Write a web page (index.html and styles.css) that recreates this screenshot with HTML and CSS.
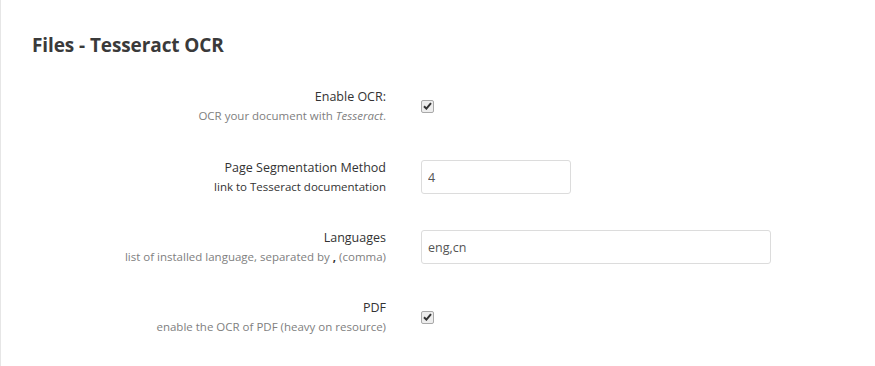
FILE: index.html
```html
<!DOCTYPE html>
<html lang="en">
<head>
    <meta charset="UTF-8">
    <meta name="viewport" content="width=device-width, initial-scale=1.0">
    <title>Files - Tesseract OCR</title>
    <link rel="stylesheet" href="styles.css">
</head>
<body>
    <div class="page">
        <h2 class="title">Files - Tesseract OCR</h2>

        <div class="form">
            <div class="row">
                <div class="label">
                    <div class="name">Enable OCR:</div>
                    <div class="help">OCR your document with <em>Tesseract</em>.</div>
                </div>
                <div class="control">
                    <span class="check">
                        <svg width="9" height="8" viewBox="0 0 9 8"><path d="M1 4.2 L3.4 6.6 L8 1.2" fill="none" stroke="#333" stroke-width="2"/></svg>
                    </span>
                </div>
            </div>

            <div class="row">
                <div class="label">
                    <div class="name">Page Segmentation Method</div>
                    <div class="help dark">link to Tesseract documentation</div>
                </div>
                <div class="control">
                    <input class="field small" type="text" value="4">
                </div>
            </div>

            <div class="row">
                <div class="label">
                    <div class="name">Languages</div>
                    <div class="help">list of installed language, separated by <b>,</b> (comma)</div>
                </div>
                <div class="control">
                    <input class="field wide" type="text" value="eng,cn">
                </div>
            </div>

            <div class="row">
                <div class="label">
                    <div class="name">PDF</div>
                    <div class="help">enable the OCR of PDF (heavy on resource)</div>
                </div>
                <div class="control">
                    <span class="check">
                        <svg width="9" height="8" viewBox="0 0 9 8"><path d="M1 4.2 L3.4 6.6 L8 1.2" fill="none" stroke="#333" stroke-width="2"/></svg>
                    </span>
                </div>
            </div>
        </div>
    </div>
</body>
</html>
```

FILE: styles.css
```css
html, body {
    margin: 0;
    height: 100%;
    background: #fff;
}
body {
    font-family: "Open Sans", "Noto Sans", sans-serif;
    color: #333;
}
.page {
    min-height: 100%;
    box-sizing: border-box;
    border-left: 1px solid #e6e6e6;
    padding: 32px 0 0 31px;
}
.title {
    margin: 0 0 29px 0;
    font-size: 19px;
    line-height: 26px;
    font-weight: 700;
    color: #3a3a3a;
    letter-spacing: -0.1px;
}
.form {
    display: flex;
    flex-direction: column;
    gap: 32px;
}
.row {
    display: grid;
    grid-template-columns: 354px 1fr;
    column-gap: 35px;
    align-items: center;
    min-height: 36px;
}
.row:nth-child(2) {
    margin-top: 1px;
}
.label {
    text-align: right;
}
.name {
    font-size: 12.5px;
    line-height: 19px;
    color: #333;
}
.help {
    font-size: 11.5px;
    line-height: 19px;
    color: #808080;
}
.help.dark {
    color: #333;
}
.help b {
    color: #333;
}
.control {
    display: flex;
    align-items: center;
}
.check {
    display: inline-flex;
    align-items: center;
    justify-content: center;
    width: 11px;
    height: 11px;
    border: 1px solid #a9a9a9;
    border-radius: 2px;
    background: #ededed;
}
.field {
    box-sizing: border-box;
    height: 34px;
    border: 1px solid #dcdcdc;
    border-radius: 3px;
    padding: 0 6px;
    font-family: "Open Sans", "Noto Sans", sans-serif;
    font-size: 12.5px;
    color: #555;
    background: #fff;
    outline: none;
}
.field.small {
    width: 150px;
}
.field.wide {
    width: 350px;
}
```
